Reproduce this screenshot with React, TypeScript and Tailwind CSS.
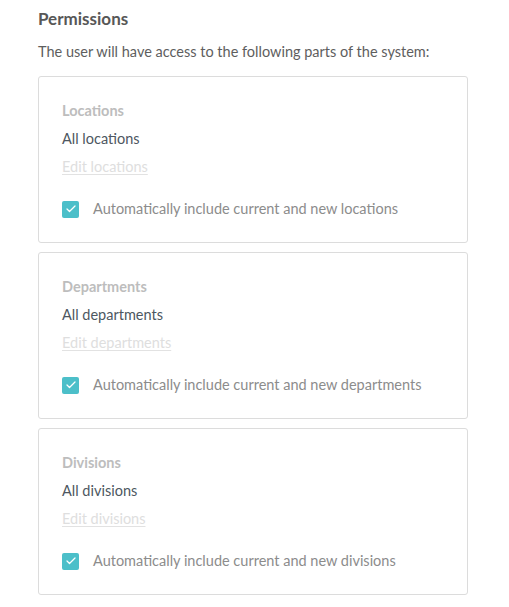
import { Check } from "lucide-react"

export default function App() {
  return (
    <div className="min-h-screen bg-white px-[38px] pt-[8px] font-['Lato',sans-serif]">
      <h2 className="text-[17px] font-bold leading-[22px] text-[#575757]">Permissions</h2>
      <p className="mt-[12px] text-[14.5px] leading-[20px] text-[#5e5e5e]">
        The user will have access to the following parts of the system:
      </p>
      <div className="mt-[14px] flex w-[430px] flex-col gap-[9px]">
        <PermissionCard title="Locations" value="All locations" link="Edit locations" check="Automatically include current and new locations" />
        <PermissionCard title="Departments" value="All departments" link="Edit departments" check="Automatically include current and new departments" />
        <PermissionCard title="Divisions" value="All divisions" link="Edit divisions" check="Automatically include current and new divisions" />
      </div>
    </div>
  )
}

interface PermissionCardProps {
  title: string
  value: string
  link: string
  check: string
}

function PermissionCard({ title, value, link, check }: PermissionCardProps) {
  return (
    <div className="h-[167px] rounded-[3px] border border-[#dcdcdc] px-[23px] pt-[24px]">
      <div className="text-[14.5px] font-bold leading-[20px] text-[#bdbdbd]">{title}</div>
      <div className="mt-[8px] text-[14.5px] leading-[20px] text-[#4d5761]">{value}</div>
      <a className="mt-[8px] block text-[14.5px] leading-[20px] text-[#dedede] underline decoration-[#e2e2e2] underline-offset-2">
        {link}
      </a>
      <label className="mt-[22px] flex items-center gap-[14px]">
        <span className="flex h-[17px] w-[17px] items-center justify-center rounded-[2px] bg-[#4cbfc9]">
          <Check size={12} strokeWidth={2.5} className="text-white" />
        </span>
        <span className="text-[14.5px] leading-[20px] text-[#8c8c8c]">{check}</span>
      </label>
    </div>
  )
}
